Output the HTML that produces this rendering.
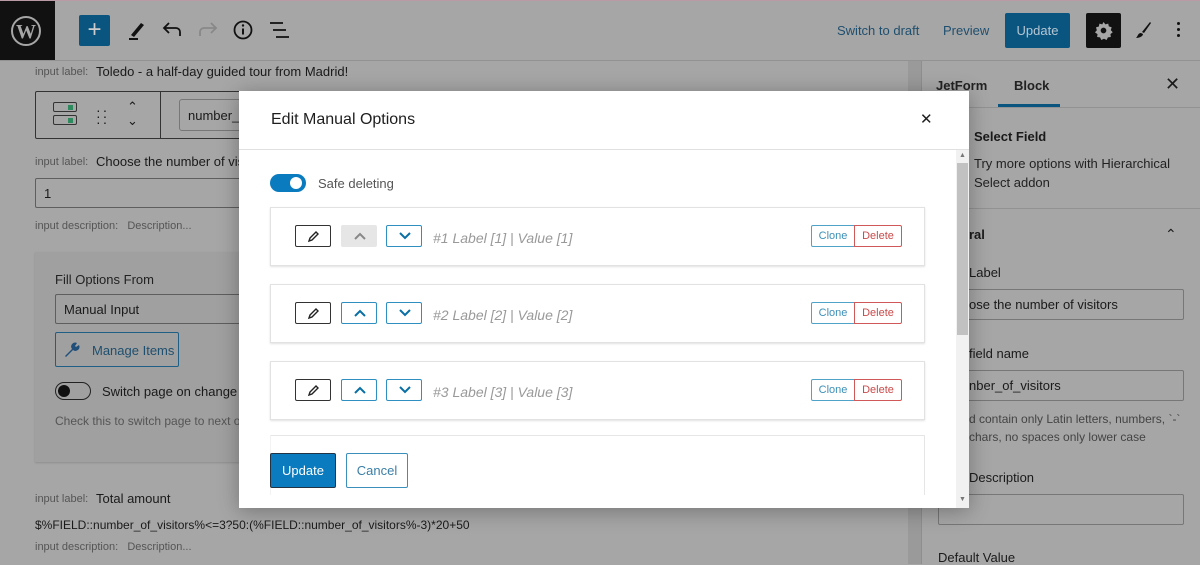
<!DOCTYPE html>
<html><head><meta charset="utf-8">
<style>
*{box-sizing:border-box;margin:0;padding:0}
body{width:1200px;height:564px;overflow:hidden;background:#a6a6a6;font-family:"Liberation Sans",sans-serif;position:relative;color:#1a1a1a}
.a{position:absolute}
.lbl{font-size:11px;color:#555}
.t13{font-size:13px}
.box{border:1px solid #5e5e5e;border-radius:2px}
.card{position:absolute;left:270px;width:655px;background:#fff;border:1px solid #e2e2e2;box-shadow:0 1px 2px rgba(0,0,0,.12);height:59px}
.btn{position:absolute;width:36px;height:22px;border:1px solid #2e8fc0;border-radius:2px;top:17px}
.pen{position:absolute;left:24px;top:17px;width:36px;height:22px;border:1px solid #333;border-radius:2px}
.ctext{position:absolute;left:162px;top:22px;font-size:14px;font-style:italic;color:#999}
.clone{position:absolute;left:540px;top:17px;width:44px;height:22px;border:1px solid #4fa3c8;color:#3d8fb8;font-size:11px;text-align:center;line-height:20px;border-radius:2px 0 0 2px}
.del{position:absolute;left:583px;top:17px;width:48px;height:22px;border:1px solid #d05858;color:#c94a4a;font-size:11px;text-align:center;line-height:20px;border-radius:0 2px 2px 0}
</style></head><body>
<!-- top bar -->
<div class="a" style="left:0;top:0;width:1200px;height:1px;background:#b99aa6"></div>
<div class="a" style="left:0;top:1px;width:55px;height:60px;background:#111"></div>
<svg class="a" style="left:11px;top:16px" width="30" height="30" viewBox="0 0 30 30"><circle cx="15" cy="15" r="14" fill="none" stroke="#a6a6a6" stroke-width="2"/><text x="15" y="22" text-anchor="middle" font-family="Liberation Serif" font-weight="bold" font-size="20" fill="#a6a6a6">W</text></svg>
<div class="a" style="left:0;top:60px;width:1200px;height:1px;background:#929292"></div>
<div class="a" style="left:79px;top:15px;width:31px;height:31px;background:#0a5580;border-radius:2px;color:#ccc;font-size:24px;text-align:center;line-height:29px">+</div>
<svg class="a" style="left:126px;top:19px" width="22" height="22" viewBox="0 0 22 22"><path d="M5 16 L15 4 L18 6 L8 18 Z" fill="#111"/><path d="M3 20h9" stroke="#111" stroke-width="2"/></svg>
<svg class="a" style="left:161px;top:20px" width="22" height="20" viewBox="0 0 22 20"><path d="M19 16 V12 a4 4 0 0 0 -4 -4 H4 M8 3 L3 8 L8 13" fill="none" stroke="#111" stroke-width="1.8"/></svg>
<svg class="a" style="left:197px;top:20px" width="22" height="20" viewBox="0 0 22 20"><path d="M3 16 V12 a4 4 0 0 1 4 -4 H18 M14 3 L19 8 L14 13" fill="none" stroke="#888" stroke-width="1.8"/></svg>
<svg class="a" style="left:232px;top:19px" width="22" height="22" viewBox="0 0 22 22"><circle cx="11" cy="11" r="8.5" fill="none" stroke="#111" stroke-width="1.8"/><path d="M11 9.5v6" stroke="#111" stroke-width="2"/><circle cx="11" cy="6.5" r="1.2" fill="#111"/></svg>
<svg class="a" style="left:268px;top:21px" width="22" height="18" viewBox="0 0 22 18"><path d="M2 2h13M5 9h13M8 16h13" stroke="#111" stroke-width="1.8"/></svg>
<div class="a t13" style="left:837px;top:23px;color:#1f4f6e">Switch to draft</div>
<div class="a t13" style="left:943px;top:23px;color:#1f4f6e">Preview</div>
<div class="a" style="left:1005px;top:13px;width:65px;height:35px;background:#0a5580;border-radius:2px;color:#b5c6d2;font-size:13px;text-align:center;line-height:35px">Update</div>
<div class="a" style="left:1086px;top:13px;width:35px;height:35px;background:#111;border-radius:2px"></div>
<svg class="a" style="left:1094px;top:21px" width="19" height="19" viewBox="0 0 20 20"><path d="M10 1l2 2.5 3-.8.6 3 3 .9-.9 3 2 2.3-2.4 1.9.4 3.1-3.1.3-1.3 2.8-2.8-1.3-2.8 1.3-1.3-2.8-3.1-.3.4-3.1L1 12l2-2.3-.9-3 3-.9.6-3 3 .8z" fill="#a6a6a6"/><circle cx="10" cy="10" r="3" fill="#111"/></svg>
<svg class="a" style="left:1133px;top:20px" width="20" height="20" viewBox="0 0 20 20"><path d="M17 2 L9 12 L11 13 L18 3 Z M8 13 C5 13 5 16 3 18 C7 18 10 16 10 14 Z" fill="#111"/></svg>
<div class="a" style="left:1177px;top:22px;width:3px;height:3px;background:#111;border-radius:50%;box-shadow:0 6px 0 #111,0 12px 0 #111"></div>

<!-- left editor -->
<div class="a" style="left:908px;top:61px;width:13px;height:503px;background:#9a9a9a"></div>
<div class="a" style="left:921px;top:61px;width:1px;height:503px;background:#8e8e8e"></div>
<div class="a lbl" style="left:35px;top:66px">input label:</div>
<div class="a t13" style="left:96px;top:64px">Toledo - a half-day guided tour from Madrid!</div>
<div class="a box" style="left:35px;top:91px;width:230px;height:48px;border-color:#333"></div>
<div class="a" style="left:160px;top:91px;width:1px;height:48px;background:#333"></div>
<div class="a" style="left:53px;top:102px;width:24px;height:10px;border:1px solid #333;border-radius:2px"></div>
<div class="a" style="left:53px;top:115px;width:24px;height:10px;border:1px solid #333;border-radius:2px"></div>
<div class="a" style="left:68px;top:105px;width:5px;height:5px;background:#2e8a5e"></div>
<div class="a" style="left:68px;top:118px;width:5px;height:5px;background:#2e8a5e"></div>
<div class="a" style="left:96px;top:107px;font-size:14px;line-height:6px;letter-spacing:2px">··<br>··<br>··</div>
<div class="a" style="left:127px;top:100px;font-size:13px;line-height:14px">⌃<br>⌄</div>
<div class="a" style="left:179px;top:99px;width:70px;height:32px;border:1px solid #777;border-radius:3px;font-size:13px;padding:8px 0 0 8px">number_</div>
<div class="a lbl" style="left:35px;top:156px">input label:</div>
<div class="a t13" style="left:96px;top:154px">Choose the number of vis</div>
<div class="a box" style="left:35px;top:178px;width:210px;height:30px;font-size:13px;padding:7px 0 0 8px">1</div>
<div class="a lbl" style="left:35px;top:220px">input description: &nbsp; Description...</div>
<div class="a" style="left:35px;top:252px;width:210px;height:210px;background:#a0a0a0;box-shadow:0 1px 2px rgba(0,0,0,.15)"></div>
<div class="a t13" style="left:55px;top:272px;color:#222">Fill Options From</div>
<div class="a box" style="left:55px;top:294px;width:190px;height:30px;font-size:13px;padding:7px 0 0 8px">Manual Input</div>
<div class="a" style="left:55px;top:332px;width:124px;height:35px;border:1px solid #1f5f85;border-radius:2px"></div>
<svg class="a" style="left:63px;top:340px" width="18" height="18" viewBox="0 0 18 18"><path d="M2 16 L9 9 A4 4 0 0 1 14 3 L12 6 L13 7 L16 5 A4 4 0 0 1 10 10 L3 17 Z" fill="#1f4f7a"/></svg>
<div class="a t13" style="left:92px;top:343px;color:#1f4f6e">Manage Items</div>
<div class="a" style="left:55px;top:382px;width:36px;height:18px;border:1px solid #222;border-radius:9px"></div>
<div class="a" style="left:58px;top:385px;width:12px;height:12px;background:#111;border-radius:50%"></div>
<div class="a t13" style="left:102px;top:384px">Switch page on change</div>
<div class="a" style="left:55px;top:414px;font-size:12px;color:#555">Check this to switch page to next o</div>
<div class="a lbl" style="left:35px;top:493px">input label:</div>
<div class="a t13" style="left:96px;top:491px">Total amount</div>
<div class="a" style="left:35px;top:518px;font-size:12px">$%FIELD::number_of_visitors%&lt;=3?50:(%FIELD::number_of_visitors%-3)*20+50</div>
<div class="a lbl" style="left:35px;top:541px">input description: &nbsp; Description...</div>

<!-- sidebar -->
<div class="a" style="left:922px;top:107px;width:278px;height:1px;background:#929292"></div>
<div class="a t13" style="left:936px;top:78px;font-weight:bold;color:#222">JetForm</div>
<div class="a t13" style="left:1014px;top:78px;font-weight:bold;color:#222">Block</div>
<div class="a" style="left:998px;top:104px;width:62px;height:3px;background:#0a5580"></div>
<div class="a" style="left:1165px;top:74px;font-size:18px">✕</div>
<div class="a t13" style="left:974px;top:129px;font-weight:bold">Select Field</div>
<div class="a t13" style="left:974px;top:154px;line-height:19px;color:#222">Try more options with Hierarchical<br>Select addon</div>
<div class="a" style="left:922px;top:208px;width:278px;height:1px;background:#929292"></div>
<div class="a t13" style="left:969px;top:227px;font-weight:bold">ral</div>
<div class="a" style="left:1165px;top:226px;font-size:14px">⌃</div>
<div class="a t13" style="left:969px;top:265px">Label</div>
<div class="a box" style="left:938px;top:289px;width:246px;height:31px;font-size:13px;padding:7px 0 0 30px;border-color:#777">ose the number of visitors</div>
<div class="a t13" style="left:969px;top:346px">field name</div>
<div class="a box" style="left:938px;top:370px;width:246px;height:31px;font-size:13px;padding:7px 0 0 30px;border-color:#777">nber_of_visitors</div>
<div class="a" style="left:969px;top:410px;font-size:12px;color:#444;line-height:18px">d contain only Latin letters, numbers, `-`<br>chars, no spaces only lower case</div>
<div class="a t13" style="left:969px;top:470px">Description</div>
<div class="a box" style="left:938px;top:494px;width:246px;height:31px;border-color:#777"></div>
<div class="a t13" style="left:938px;top:550px">Default Value</div>

<!-- modal -->
<div class="a" style="left:239px;top:91px;width:730px;height:417px;background:#fff;box-shadow:0 3px 20px rgba(0,0,0,.3)"></div>
<div class="a" style="left:271px;top:111px;font-size:16px;color:#1e1e1e">Edit Manual Options</div>
<div class="a" style="left:920px;top:110px;font-size:15px;color:#1e1e1e">✕</div>
<div class="a" style="left:239px;top:149px;width:730px;height:1px;background:#e0e0e0"></div>
<div class="a" style="left:956px;top:150px;width:13px;height:358px;background:#f1f1f1"></div>
<div class="a" style="left:957px;top:163px;width:11px;height:172px;background:#c1c1c1"></div>
<div class="a" style="left:959px;top:152px;font-size:7px;color:#777">▲</div>
<div class="a" style="left:959px;top:496px;font-size:7px;color:#777">▼</div>
<div class="a" style="left:270px;top:174px;width:36px;height:18px;background:#0a7bbf;border-radius:9px"></div>
<div class="a" style="left:290px;top:177px;width:12px;height:12px;background:#fff;border-radius:50%"></div>
<div class="a t13" style="left:318px;top:176px;color:#555">Safe deleting</div>

<div class="card" style="top:207px">
<div class="pen"><svg style="position:absolute;left:11px;top:3px" width="13" height="14" viewBox="0 0 13 14"><path d="M2 12 L3 9 L9 3 L11 5 L5 11 Z" fill="none" stroke="#222" stroke-width="1.4"/></svg></div>
<div class="btn" style="left:70px;border-color:#e6e6e6;background:#e6e6e6"><svg style="position:absolute;left:11px;top:5px" width="14" height="10"><path d="M2 8 L7 3 L12 8" fill="none" stroke="#888" stroke-width="2"/></svg></div>
<div class="btn" style="left:115px"><svg style="position:absolute;left:11px;top:5px" width="14" height="10"><path d="M2 2 L7 7 L12 2" fill="none" stroke="#0a6fa5" stroke-width="2"/></svg></div>
<div class="ctext">#1 Label [1] | Value [1]</div><div class="clone">Clone</div><div class="del">Delete</div></div>

<div class="card" style="top:284px">
<div class="pen"><svg style="position:absolute;left:11px;top:3px" width="13" height="14" viewBox="0 0 13 14"><path d="M2 12 L3 9 L9 3 L11 5 L5 11 Z" fill="none" stroke="#222" stroke-width="1.4"/></svg></div>
<div class="btn" style="left:70px"><svg style="position:absolute;left:11px;top:5px" width="14" height="10"><path d="M2 8 L7 3 L12 8" fill="none" stroke="#0a6fa5" stroke-width="2"/></svg></div>
<div class="btn" style="left:115px"><svg style="position:absolute;left:11px;top:5px" width="14" height="10"><path d="M2 2 L7 7 L12 2" fill="none" stroke="#0a6fa5" stroke-width="2"/></svg></div>
<div class="ctext">#2 Label [2] | Value [2]</div><div class="clone">Clone</div><div class="del">Delete</div></div>

<div class="card" style="top:361px">
<div class="pen"><svg style="position:absolute;left:11px;top:3px" width="13" height="14" viewBox="0 0 13 14"><path d="M2 12 L3 9 L9 3 L11 5 L5 11 Z" fill="none" stroke="#222" stroke-width="1.4"/></svg></div>
<div class="btn" style="left:70px"><svg style="position:absolute;left:11px;top:5px" width="14" height="10"><path d="M2 8 L7 3 L12 8" fill="none" stroke="#0a6fa5" stroke-width="2"/></svg></div>
<div class="btn" style="left:115px"><svg style="position:absolute;left:11px;top:5px" width="14" height="10"><path d="M2 2 L7 7 L12 2" fill="none" stroke="#0a6fa5" stroke-width="2"/></svg></div>
<div class="ctext">#3 Label [3] | Value [3]</div><div class="clone">Clone</div><div class="del">Delete</div></div>

<div class="a" style="left:270px;top:435px;width:655px;height:60px;border:1px solid #e6e6e6;border-bottom:none;border-left-color:#f3f3f3"></div>
<div class="a" style="left:270px;top:453px;width:66px;height:35px;background:#0a7bbf;border:1px solid #234;border-radius:2px;color:#fff;font-size:13px;text-align:center;line-height:33px">Update</div>
<div class="a" style="left:346px;top:453px;width:62px;height:35px;border:1px solid #3b8fbb;border-radius:2px;color:#3b7ea6;font-size:13px;text-align:center;line-height:33px">Cancel</div>
</body></html>
